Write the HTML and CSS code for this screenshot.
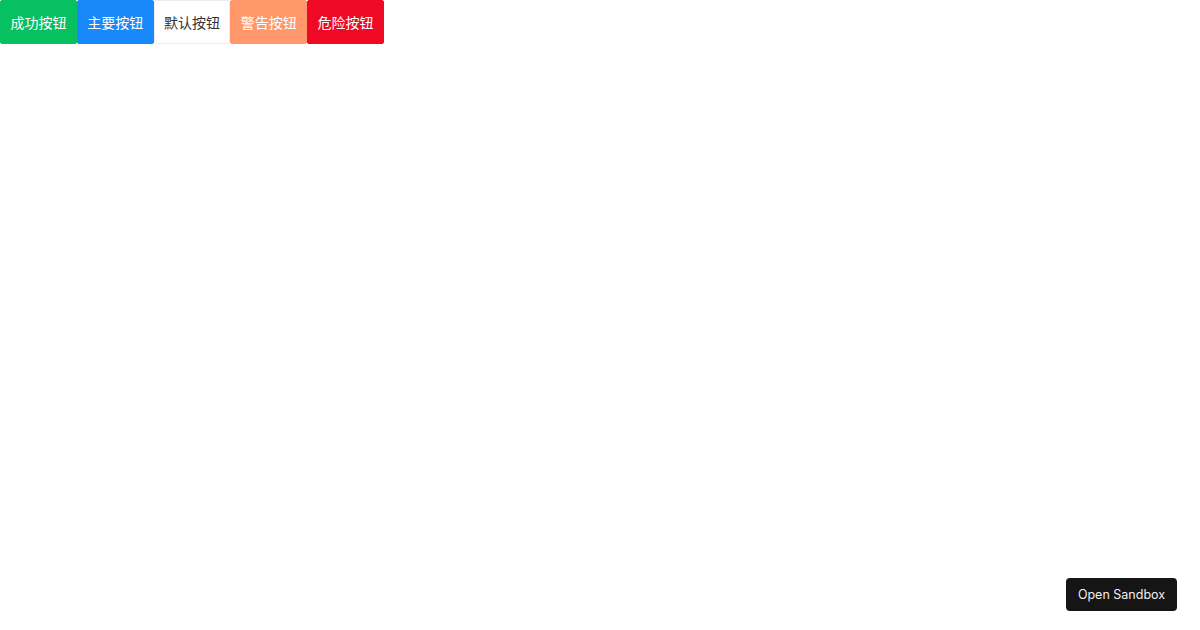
FILE: index.html
```html
<!DOCTYPE html>
<html lang="zh-CN">
<head>
<meta charset="utf-8">
<title>Buttons</title>
<link rel="stylesheet" href="styles.css">
</head>
<body>
<div class="row">
  <button class="btn btn-success">成功按钮</button>
  <button class="btn btn-primary">主要按钮</button>
  <button class="btn btn-default">默认按钮</button>
  <button class="btn btn-warning">警告按钮</button>
  <button class="btn btn-danger">危险按钮</button>
</div>
<a class="sandbox" href="#">Open Sandbox</a>
</body>
</html>
```

FILE: styles.css
```css
html, body {
  margin: 0;
  padding: 0;
  background: #fff;
}
body {
  font-family: "Noto Sans CJK SC", "Liberation Sans", sans-serif;
}
.row {
  display: flex;
}
.btn {
  box-sizing: border-box;
  width: 76.8px;
  height: 44px;
  margin: 0;
  padding: 0;
  border: 1px solid transparent;
  border-radius: 2px;
  font-family: "Noto Sans CJK SC", sans-serif;
  font-size: 14px;
  line-height: 42px;
  text-align: center;
  color: #fff;
  cursor: pointer;
}
.btn-success { background: #07c160; border-color: #07c160; }
.btn-primary { background: #1989fa; border-color: #1989fa; }
.btn-default { background: #fff; border-color: #ebedf0; color: #323233; }
.btn-warning { background: #ff976a; border-color: #ff976a; }
.btn-danger  { background: #ee0a24; border-color: #ee0a24; }

.sandbox {
  position: fixed;
  right: 23px;
  bottom: 19px;
  box-sizing: border-box;
  width: 111px;
  height: 33px;
  display: flex;
  align-items: center;
  justify-content: center;
  background: #151515;
  color: #f0f0f0;
  border-radius: 4px;
  font-family: Inter, "Liberation Sans", sans-serif;
  font-size: 12.5px;
  text-decoration: none;
}
```
